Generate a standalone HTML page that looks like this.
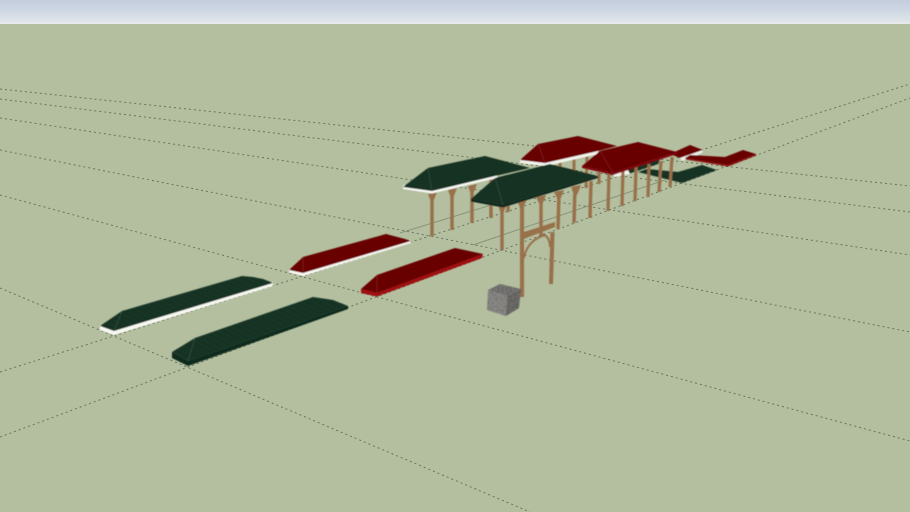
<!DOCTYPE html>
<html>
<head>
<meta charset="utf-8">
<style>
html,body{margin:0;padding:0;background:#b3bf9f}
body{width:910px;height:512px;overflow:hidden}
svg{display:block}
</style>
</head>
<body>
<svg width="910" height="512" viewBox="0 0 910 512" xmlns="http://www.w3.org/2000/svg">
<defs>
<linearGradient id="sky" x1="0" y1="0" x2="0" y2="1">
<stop offset="0" stop-color="#c3cddd"/>
<stop offset="0.4" stop-color="#cdd6e3"/>
<stop offset="0.9" stop-color="#e0e5ea"/>
<stop offset="1" stop-color="#e8ece9"/>
</linearGradient>
<filter id="soft" x="-5%" y="-5%" width="110%" height="110%"><feGaussianBlur stdDeviation="0.5"/></filter>
<filter id="stone" x="0" y="0" width="100%" height="100%">
<feTurbulence type="fractalNoise" baseFrequency="0.5" numOctaves="2" seed="4" result="n"/>
<feColorMatrix in="n" type="matrix" values="0 0 0 0 0 0 0 0 0 0 0 0 0 0 0 1 0 0 0 -0.4" result="d"/>
<feComposite in="d" in2="SourceGraphic" operator="in" result="c"/>
<feMerge><feMergeNode in="SourceGraphic"/><feMergeNode in="c"/></feMerge>
</filter>
<pattern id="ribs" width="5" height="5" patternUnits="userSpaceOnUse" patternTransform="rotate(-62)">
<rect width="5" height="5" fill="#133024"/>
<rect width="1" height="5" fill="#1a382c"/>
</pattern>
</defs>
<rect width="910" height="512" fill="#b3bf9f"/>
<rect width="910" height="24" fill="url(#sky)"/>

<!-- construction lines -->
<g stroke="#4c5443" stroke-width="1" stroke-dasharray="2 3" fill="none" opacity=".7">
<line x1="0" y1="89" x2="910" y2="186"/>
<line x1="0" y1="99" x2="910" y2="212"/>
<line x1="0" y1="118" x2="910" y2="255"/>
<line x1="0" y1="150" x2="910" y2="332"/>
<line x1="0" y1="195" x2="910" y2="441"/>
<line x1="0" y1="288" x2="530" y2="512"/>
<line x1="0" y1="372" x2="910" y2="84"/>
<line x1="0" y1="437" x2="910" y2="98"/>
</g>
<g stroke="#8a947c" stroke-width="1" fill="none">
<line x1="400" y1="233" x2="540" y2="190"/>
<line x1="473" y1="245" x2="665" y2="180"/>
</g>

<g filter="url(#soft)">
<!-- far green flat -->
<polygon points="638,172 682,183 717,170 702,165 678,172 647,169" fill="#133024"/>
<!-- far red small -->
<polygon points="670,154 690,145 703,150 680,158" fill="#690006"/>
<polygon points="680,158 703,150 702,153 682,161" fill="#eef0ea"/>
<!-- far red flat -->
<polygon points="685,158 728,165 756,154 743,150 725,157 690,155" fill="#690006"/>
<polygon points="685,158 728,165 756,154 756,155.5 728,166.5 686,159.5" fill="#8a080e"/>

<!-- back red roof -->
<g stroke="#98704a" stroke-width="3" fill="none">
<line x1="560" y1="160" x2="560" y2="167"/>
<line x1="574" y1="158" x2="574" y2="170"/>
<line x1="587" y1="156" x2="586" y2="188"/>
<line x1="599" y1="172" x2="599" y2="184"/>
</g>
<polygon points="520,159 545,162 546,166 520,163" fill="#f4f4ee"/>
<polygon points="545,162 598,150 598,154 546,166" fill="#f4f4ee"/>
<polygon points="520,160 538,144 578,136 617,146 598,151 545,163" fill="#690006"/>
<line x1="538" y1="144" x2="545" y2="163" stroke="#852528" stroke-width=".6"/>

<!-- red front posts -->
<polygon points="625,170 660,159 658,164 628,174" fill="#133024"/>
<polygon points="612,173 628,170 630,174 615,177" fill="#f4f4ee"/>
<g stroke="#98704a" stroke-width="3.2" fill="none">
<line x1="609" y1="172" x2="608" y2="211"/>
<line x1="623" y1="170" x2="622" y2="206"/>
<line x1="636" y1="167" x2="635" y2="201"/>
<line x1="649" y1="164" x2="648" y2="197"/>
<line x1="661" y1="161" x2="659" y2="192"/>
<line x1="672" y1="157" x2="670" y2="187"/>
</g>
<!-- front red roof -->
<polygon points="582,166 600,151 638,142 677,152 613,173" fill="#690006"/>
<polygon points="582,166 613,173 677,152 677,154 613,175 582,168" fill="#80050c"/>
<line x1="600" y1="151" x2="613" y2="173" stroke="#852528" stroke-width=".6"/>

<!-- green roof 1 posts -->
<g stroke="#98704a" stroke-width="3.4" fill="none">
<line x1="432" y1="195" x2="432" y2="236"/>
<line x1="452" y1="190" x2="452" y2="230"/>
<line x1="472" y1="186" x2="472" y2="223"/>
<line x1="491" y1="178" x2="491" y2="218"/>
<line x1="508" y1="200" x2="508" y2="212"/>
</g>
<g fill="#98704a">
<polygon points="428,194 437,192 433,202 431,202"/>
<polygon points="448,190 457,188 453,198 451,198"/>
<polygon points="468,186 477,184 473,194 471,194"/>
</g>
<!-- white fascia and roof 1 -->
<polygon points="403,185 432,189 497,174 497,178 432,193.5 403,189" fill="#f8f8f2"/>
<polygon points="403,187 428,168 485,156 530,168 495,176 432,191" fill="#133024"/>
<line x1="428" y1="168" x2="432" y2="191" stroke="#3a5548" stroke-width=".6"/>

<!-- green roof 2 posts -->
<g stroke="#98704a" stroke-width="3.4" fill="none">
<line x1="502" y1="205" x2="502" y2="250"/>
<line x1="541" y1="196" x2="541" y2="236"/>
<line x1="559" y1="191" x2="558" y2="229"/>
<line x1="575" y1="186" x2="574" y2="223"/>
<line x1="591" y1="181" x2="590" y2="218"/>
</g>
<g fill="#98704a">
<polygon points="498,205 507,203 503,214 501,214"/>
<polygon points="517,201 527,199 523,209 521,209"/>
<polygon points="536,197 546,195 542,205 540,205"/>
<polygon points="554,192 564,190 560,200 558,200"/>
<polygon points="571,187 581,185 577,195 575,195"/>
</g>
<!-- green roof 2 -->
<polygon points="471,199 495,178 550,164 598,176 503,205" fill="#133024"/>
<polygon points="471,199 503,205 598,176 598,178 503,207.5 471,201.5" fill="#0e281d"/>
<line x1="495" y1="178" x2="503" y2="205" stroke="#3a5548" stroke-width=".6"/>

<!-- arch -->
<g fill="none" stroke="#98704a">
<line x1="522" y1="202" x2="522" y2="297" stroke-width="4"/>
<line x1="552.5" y1="232" x2="551" y2="284" stroke-width="4"/>
<polygon points="521,233 555,222 555,227 521,240" stroke="none" fill="#98704a"/>
<path d="M524 258 C526 246 534 238 545 235" stroke-width="2"/>
<path d="M550 247 C550 240 547 236 543 234" stroke-width="2"/>
</g>

<!-- stone block -->
<g filter="url(#stone)">
<polygon points="488,290 500,284 521,289 507,296" fill="#777674"/>
<polygon points="488,290 507,296 506,316 487,310" fill="#8a8986"/>
<polygon points="507,296 521,289 519,308 506,316" fill="#6e6d6b"/>
</g>

<!-- green platform 1 -->
<polygon points="100,325 114,330 273,282 273,286 114,335 100,330" fill="#f8f8f2"/>
<polygon points="100,326 122,311 242,276 253,277 263,279 273,283 114,331" fill="url(#ribs)"/>
<line x1="122" y1="311" x2="114" y2="331" stroke="#3a5548" stroke-width=".6"/>

<!-- green platform 2 -->
<polygon points="172,352 195,338 313,297 333,300 348,306 188,361" fill="url(#ribs)"/>
<polygon points="172,352 188,361 348,306 348,309 188,366 172,358" fill="#10291e"/>
<line x1="195" y1="338" x2="188" y2="361" stroke="#3a5548" stroke-width=".6"/>

<!-- red platform 1 -->
<polygon points="289,269 303,272 411,240 411,243 303,276 289,272.5" fill="#f8f8f2"/>
<polygon points="289,270 303,257 386,234 405,239 411,241 303,273" fill="#690006"/>
<line x1="303" y1="257" x2="303" y2="273" stroke="#852528" stroke-width=".6"/>

<!-- red platform 2 -->
<polygon points="361,289 377,293 483,254 482,258 377,296.5 361,293" fill="#a00810"/>
<polygon points="361,289 377,275 455,248 483,254 377,293" fill="#690006"/>
<line x1="377" y1="275" x2="377" y2="293" stroke="#852528" stroke-width=".6"/>
</g>
</svg>
</body>
</html>
